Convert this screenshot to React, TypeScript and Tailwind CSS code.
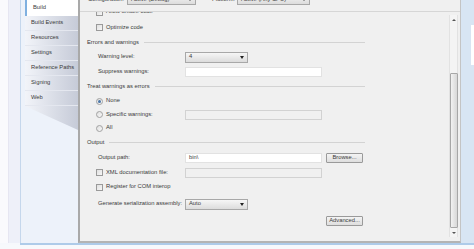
import React from "react";

const tabs = [
  "Build",
  "Build Events",
  "Resources",
  "Settings",
  "Reference Paths",
  "Signing",
  "Web",
];

function CheckBox() {
  return (
    <span className="inline-block h-[7px] w-[7px] shrink-0 border border-[#9a9a9a] bg-gradient-to-br from-[#e0e0e0] to-[#f6f6f6]" />
  );
}

function Radio({ checked }: { checked?: boolean }) {
  return (
    <span className="flex h-[7px] w-[7px] shrink-0 items-center justify-center rounded-full border border-[#a2a2a2] bg-gradient-to-br from-[#e0e0e0] to-[#f8f8f8]">
      {checked && <span className="h-[3px] w-[3px] rounded-full bg-[#4a76a8]" />}
    </span>
  );
}

function TextBox({ value, disabled }: { value?: string; disabled?: boolean }) {
  return (
    <div
      className={`flex h-[10px] w-[137px] items-center border px-[3px] ${
        disabled ? "border-[#d2d2d2] bg-[#f0f0f0]" : "border-[#e2e2e2] bg-white"
      }`}
    >
      {value}
    </div>
  );
}

function Select({ value, width = "w-[63px]" }: { value: string; width?: string }) {
  return (
    <div
      className={`flex h-[11px] ${width} items-center justify-between border border-[#a8a8a8] bg-gradient-to-b from-[#f6f6f6] to-[#dcdcdc] pl-[3px] pr-[3px]`}
    >
      <span className="whitespace-nowrap">{value}</span>
      <span className="h-0 w-0 border-x-[2px] border-t-[3px] border-x-transparent border-t-[#222]" />
    </div>
  );
}

function Button({ label }: { label: string }) {
  return (
    <div className="flex h-[10px] w-[37px] items-center justify-center rounded-[1px] border border-[#9a9a9a] bg-gradient-to-b from-[#f4f4f4] to-[#dedede]">
      {label}
    </div>
  );
}

function Header({ label }: { label: string }) {
  return (
    <div className="flex items-center gap-[5px] pl-[7px]">
      <span className="whitespace-nowrap">{label}</span>
      <div className="flex-1 border-t border-[#d3d3d3]" />
    </div>
  );
}

function Field({
  label,
  children,
}: {
  label: React.ReactNode;
  children?: React.ReactNode;
}) {
  return (
    <div className="flex items-center">
      <div className="w-[105px] shrink-0 whitespace-nowrap pl-[18px]">{label}</div>
      {children}
    </div>
  );
}

function CheckLine({ label }: { label: string }) {
  return (
    <div className="flex items-center gap-[3px] whitespace-nowrap pl-[16px]">
      <CheckBox />
      <span>{label}</span>
    </div>
  );
}

function RadioLine({ label, checked }: { label: string; checked?: boolean }) {
  return (
    <div className="flex items-center gap-[3px] whitespace-nowrap pl-[16px]">
      <Radio checked={checked} />
      <span>{label}</span>
    </div>
  );
}

export default function App() {
  return (
    <div
      className="flex h-[249px] w-[474px] flex-col overflow-hidden bg-[#f6f8fc] text-[5.8px] leading-none text-[#3a3a3a]"
      style={{ fontFamily: '"Liberation Sans", Arial, sans-serif' }}
    >
      <div className="flex h-[243px] shrink-0">
        {/* outer frame left */}
        <div className="w-[8px] shrink-0 bg-[#fafafd]" />
        <div className="w-[12px] shrink-0 border-l border-[#e6e6f2] bg-[#eef0f9]" />

        {/* tab strip */}
        <div className="flex w-[58px] shrink-0 flex-col border-l border-[#c5d7ec] bg-[#edf2fa] pl-[4px]">
          <div className="flex flex-col bg-gradient-to-r from-[#f2f4f9] to-[#c6cbd8]">
            {tabs.map((t, i) => (
              <div
                key={t}
                className={`flex h-[15px] items-center whitespace-nowrap pl-[6px] ${
                  i === 0
                    ? "h-[16px] border-l-2 border-[#7fb0e0] bg-white"
                    : "border-b border-[#e4e7ef]"
                }`}
              >
                {t}
              </div>
            ))}
          </div>
          <div className="h-[24px] bg-gradient-to-r from-[#f2f4f9] to-[#c6cbd8] [clip-path:polygon(0_0,100%_0,100%_100%)]" />
        </div>

        {/* main panel */}
        <div className="flex min-w-0 flex-1 flex-col border-l-2 border-b-2 border-r border-l-[#a9a9a9] border-b-[#b4b4b4] border-r-[#c4c4c4] bg-[#f0f0f0]">
          {/* configuration bar */}
          <div className="flex h-[12px] shrink-0 items-end overflow-hidden border-b border-[#d6d6d6]">
            <div className="mb-[6px] flex items-center gap-[4px] whitespace-nowrap pl-[8px]">
              <span className="w-[35px]">Configuration:</span>
              <Select value="Active (Debug)" width="w-[69px]" />
              <span className="ml-[12px] w-[21px]">Platform:</span>
              <Select value="Active (Any CPU)" width="w-[73px]" />
            </div>
          </div>

          <div className="flex min-h-0 flex-1">
            {/* scrolled content */}
            <div className="min-w-0 flex-1 overflow-hidden pr-[2px]">
              <div className="-mt-[8px] flex w-[285px] flex-col">
                <div className="flex h-[16px] items-center">
                  <CheckLine label="Allow unsafe code" />
                </div>
                <div className="flex h-[15px] items-center">
                  <CheckLine label="Optimize code" />
                </div>
                <div className="flex h-[15px] flex-col justify-center">
                  <Header label="Errors and warnings" />
                </div>
                <div className="flex h-[14px] flex-col justify-center">
                  <Field label="Warning level:">
                    <Select value="4" />
                  </Field>
                </div>
                <div className="flex h-[15px] flex-col justify-center">
                  <Field label="Suppress warnings:">
                    <TextBox />
                  </Field>
                </div>
                <div className="flex h-[15px] flex-col justify-center">
                  <Header label="Treat warnings as errors" />
                </div>
                <div className="flex h-[14px] items-center">
                  <RadioLine label="None" checked />
                </div>
                <div className="flex h-[13px] flex-col justify-center">
                  <div className="flex items-center">
                    <div className="w-[105px] shrink-0">
                      <RadioLine label="Specific warnings:" />
                    </div>
                    <TextBox disabled />
                  </div>
                </div>
                <div className="flex h-[14px] items-center">
                  <RadioLine label="All" />
                </div>
                <div className="flex h-[15px] flex-col justify-center">
                  <Header label="Output" />
                </div>
                <div className="flex h-[15px] flex-col justify-center">
                  <Field label="Output path:">
                    <TextBox value="bin\" />
                    <div className="ml-[4px]">
                      <Button label="Browse..." />
                    </div>
                  </Field>
                </div>
                <div className="flex h-[15px] flex-col justify-center">
                  <div className="flex items-center">
                    <div className="w-[105px] shrink-0">
                      <CheckLine label="XML documentation file:" />
                    </div>
                    <TextBox disabled />
                  </div>
                </div>
                <div className="flex h-[14px] items-center">
                  <CheckLine label="Register for COM interop" />
                </div>
                <div className="flex h-[20px] flex-col justify-center">
                  <Field label="Generate serialization assembly:">
                    <Select value="Auto" />
                  </Field>
                </div>
                <div className="flex h-[14px] items-center justify-end pr-[2px]">
                  <Button label="Advanced..." />
                </div>
              </div>
            </div>

            {/* scrollbar */}
            <div className="mr-[2px] mt-[3px] mb-[4px] flex w-[9px] shrink-0 flex-col items-center border-x border-[#e2e2e2] bg-[#f4f4f4]">
              <div className="flex h-[9px] items-center justify-center">
                <span className="h-0 w-0 border-x-[2px] border-b-[2px] border-x-transparent border-b-[#555]" />
              </div>
              <div className="mt-[49px] w-[8px] flex-1 rounded-[1px] border border-[#a7a7a7] bg-gradient-to-r from-[#f2f2f2] to-[#d8d8d8]" />
              <div className="flex h-[9px] items-center justify-center">
                <span className="h-0 w-0 border-x-[2px] border-t-[2px] border-x-transparent border-t-[#555]" />
              </div>
            </div>
          </div>
        </div>

        {/* outer frame right */}
        <div className="flex w-[13px] shrink-0">
          <div className="w-[10px] bg-[#d8e5f3]" />
          <div className="flex w-[3px] flex-col bg-[#d8e5f3]">
            <div className="mt-[25px] h-[40px] bg-white" />
          </div>
        </div>
      </div>
      <div className="ml-[20px] h-[2px] shrink-0 bg-[#aecbe9]" />
      <div className="flex-1 bg-[#f7f9fc]" />
    </div>
  );
}
